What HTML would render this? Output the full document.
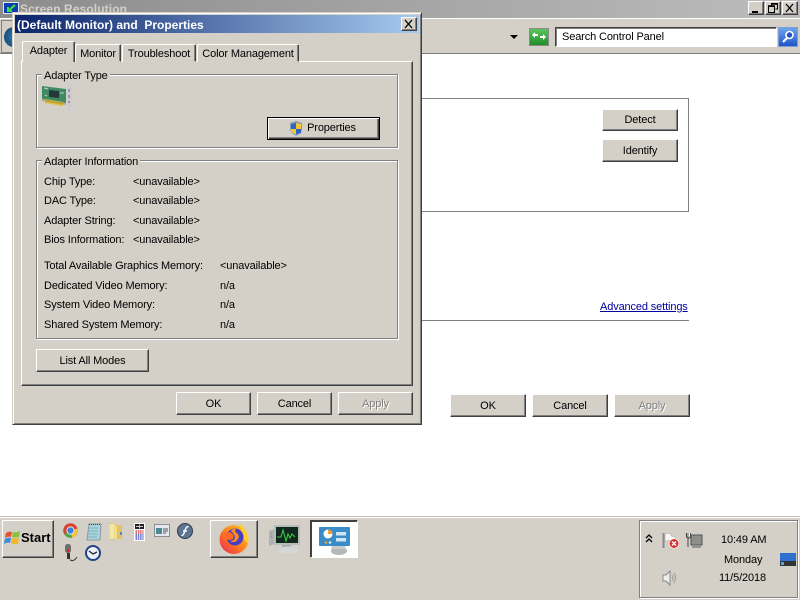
<!DOCTYPE html>
<html><head><meta charset="utf-8"><style>
html,body{margin:0;padding:0;width:800px;height:600px;overflow:hidden;background:#fff}
body{position:relative;font-family:"Liberation Sans",sans-serif;font-size:11px;letter-spacing:-.13px;color:#000}
div,svg,span.t{position:absolute;box-sizing:border-box}
.t{white-space:nowrap;line-height:14px}
.f{background:#d4d0c8}
.b{background:#d4d0c8;border:1px solid;border-color:#fff #404040 #404040 #fff;box-shadow:inset -1px -1px 0 #808080;text-align:center;white-space:nowrap;line-height:22px}
.g{border:1px solid #808080;box-shadow:1px 1px 0 #fff,inset 1px 1px 0 #fff}
.tab{background:#d4d0c8;border:1px solid;border-color:#fff #404040 transparent #fff;border-radius:2px 2px 0 0;text-align:center;line-height:18px;box-shadow:inset -1px 0 0 #808080;white-space:nowrap}
.dis{color:#808080;text-shadow:1px 1px 0 #fff}
</style></head><body>

<div style="left:0;top:0;width:800px;height:18px;background:linear-gradient(90deg,#8c8c8c,#bcbcbc)"></div>
<svg style="left:3px;top:2px" width="16" height="14" viewBox="0 0 16 14"><rect x=".5" y=".5" width="15" height="11" fill="#0b3fb0" stroke="#dfe8f0"/><path d="M12 3L5 9M5 5v4h4" stroke="#3fe03f" stroke-width="2" fill="none"/></svg>
<span class="t" style="left:20px;top:2px;font-weight:bold;font-size:12px;letter-spacing:.1px;color:#d4d0c8">Screen Resolution</span>
<div class="b" style="left:748px;top:1px;width:16px;height:14px"></div>
<svg style="left:748px;top:1px" width="16" height="14" viewBox="0 0 16 14"><path d="M4 10h6v2H4z" fill="#000"/></svg>
<div class="b" style="left:765px;top:1px;width:16px;height:14px"></div>
<svg style="left:765px;top:1px" width="16" height="14" viewBox="0 0 16 14"><path d="M6.500 4.500V2.500H12.500V8H10.500M3.500 5.500H9.500V11.500H3.500z" fill="none" stroke="#000"/><path d="M6 3h7M3 5h7" stroke="#000" stroke-width="1.500"/></svg>
<div class="b" style="left:782px;top:1px;width:16px;height:14px"></div>
<svg style="left:782px;top:1px" width="16" height="14" viewBox="0 0 16 14"><path d="M4 3l7 8M11 3l-7 8" stroke="#000" stroke-width="1.300"/></svg>

<div class="f" style="left:0;top:18px;width:800px;height:36px;border-top:1px solid #fff;border-bottom:1px solid #808080"></div>
<div style="left:1px;top:20px;width:14px;height:33px;border:1px solid #808080;background:#d4d0c8"></div>
<div style="left:4px;top:27px;width:20px;height:20px;border-radius:50%;background:radial-gradient(circle at 60% 50%,#fff 0 2px,#2a78b0 3px,#113a5e)"></div>
<svg style="left:510px;top:35px" width="8" height="4"><path d="M0 0h8L4 4z" fill="#000"/></svg>
<div style="left:529px;top:28px;width:20px;height:18px;border:1px solid #8a8a8a;background:linear-gradient(#5cc55c,#1f8f2a)"></div>
<svg style="left:531px;top:29px" width="16" height="15" viewBox="0 0 16 15"><path d="M1 6l3-3v2h3v2H4v2zM15 8l-3 3v-2H9V7h3V5z" fill="#fff"/></svg>
<div style="left:555px;top:27px;width:222px;height:20px;background:#fff;border:1px solid;border-color:#404040 #fff #fff #404040;box-shadow:inset 1px 1px 0 #808080"></div>
<span class="t" style="left:562px;top:30px">Search Control Panel</span>
<div style="left:778px;top:27px;width:20px;height:20px;border:1px solid #7fa0d0;background:linear-gradient(#6fa4ec,#1f55c8)"></div>
<svg style="left:780px;top:29px" width="16" height="16" viewBox="0 0 16 16"><circle cx="9.500" cy="6" r="3.500" fill="#1f55c8" stroke="#fff" stroke-width="1.600"/><path d="M7 9l-4 4" stroke="#fff" stroke-width="2.200"/></svg>

<div style="left:400px;top:98px;width:289px;height:114px;border:1px solid #808080;background:#fff"></div>
<div class="b" style="left:602px;top:109px;width:76px;height:22px;line-height:21px">Detect</div>
<div class="b" style="left:602px;top:139px;width:76px;height:23px;line-height:22px">Identify</div>
<span class="t" style="left:600px;top:300px;color:#00009c;text-decoration:underline">Advanced settings</span>
<div style="left:420px;top:320px;width:269px;height:1px;background:#808080"></div>
<div class="b" style="left:450px;top:394px;width:76px;height:23px">OK</div>
<div class="b" style="left:532px;top:394px;width:76px;height:23px">Cancel</div>
<div class="b dis" style="left:614px;top:394px;width:76px;height:23px">Apply</div>

<!-- dialog -->
<div class="f" style="left:12px;top:12px;width:410px;height:413px;border:1px solid;border-color:#d4d0c8 #404040 #404040 #d4d0c8;box-shadow:inset 1px 1px 0 #fff,inset -1px -1px 0 #808080"></div>
<div style="left:15px;top:15px;width:404px;height:18px;background:linear-gradient(90deg,#0a246a,#a6caf0)"></div>
<span class="t" style="left:17px;top:18px;color:#fff;font-weight:bold;font-size:12px;letter-spacing:0">(Default Monitor) and&nbsp; Properties</span>
<div class="b" style="left:401px;top:17px;width:16px;height:14px"></div>
<svg style="left:401px;top:17px" width="16" height="14" viewBox="0 0 16 14"><path d="M4 3l7 8M11 3l-7 8" stroke="#000" stroke-width="1.300"/></svg>

<div style="left:21px;top:61px;width:392px;height:325px;background:#d4d0c8;border:1px solid;border-color:#fff #404040 #404040 #fff;box-shadow:inset -1px -1px 0 #808080"></div>
<div class="tab" style="left:75px;top:44px;width:46px;height:18px">Monitor</div>
<div class="tab" style="left:122px;top:44px;width:74px;height:18px">Troubleshoot</div>
<div class="tab" style="left:197px;top:44px;width:102px;height:18px">Color Management</div>
<div class="tab" style="left:22px;top:41px;width:53px;height:21px;line-height:18px;border-bottom:0;z-index:2">Adapter</div>

<div class="g" style="left:36px;top:74px;width:362px;height:74px"></div>
<span class="t f" style="left:42px;top:69px;height:13px;padding:1px 2px 0;line-height:13px">Adapter Type</span>
<svg style="left:42px;top:83px" width="31" height="29" viewBox="0 0 31 29"><path d="M0 3L24 6V20L0 16z" fill="#3f8a62"/><path d="M7 7l10 1v7L7 14z" fill="#24383a"/><path d="M2 5l4 1M18 10l4 0M3 12l2 1" stroke="#bcd8c0"/><path d="M3 16l18 3v4L3 20z" fill="#dcbc3c"/><path d="M0 16l24 4v2L0 18z" fill="#8a7a3a" opacity=".4"/><path d="M25 2l4-1 1 2-1 25-3 0z" fill="#c8ccd0"/><path d="M27 6v3M27 12v3M27 18v2" stroke="#667"/></svg>
<div class="b" style="left:267px;top:117px;width:113px;height:23px;border:1px solid #000;box-shadow:inset 1px 1px 0 #fff,inset -1px -1px 0 #404040,inset -2px -2px 0 #808080;line-height:21px;padding-left:16px">Properties</div>
<svg style="left:289px;top:121px" width="14" height="15" viewBox="0 0 14 15"><path d="M7 0L13 2V8Q13 12 7 15Q1 12 1 8V2z" fill="#8a9ab0"/><path d="M7 2V8H2V3zM7 8H12V12L7 13.500z" fill="#2a66c8"/><path d="M7 2L12 3V8H7zM7 8V13.500L2 11V8z" fill="#f2c830"/></svg>

<div class="g" style="left:36px;top:160px;width:362px;height:179px"></div>
<span class="t f" style="left:42px;top:155px;height:13px;padding:1px 2px 0;line-height:13px">Adapter Information</span>
<span class="t" style="left:44px;top:175px">Chip Type:</span><span class="t" style="left:133px;top:175px">&lt;unavailable&gt;</span>
<span class="t" style="left:44px;top:194px">DAC Type:</span><span class="t" style="left:133px;top:194px">&lt;unavailable&gt;</span>
<span class="t" style="left:44px;top:214px">Adapter String:</span><span class="t" style="left:133px;top:214px">&lt;unavailable&gt;</span>
<span class="t" style="left:44px;top:233px">Bios Information:</span><span class="t" style="left:133px;top:233px">&lt;unavailable&gt;</span>
<span class="t" style="left:44px;top:259px">Total Available Graphics Memory:</span><span class="t" style="left:220px;top:259px">&lt;unavailable&gt;</span>
<span class="t" style="left:44px;top:279px">Dedicated Video Memory:</span><span class="t" style="left:220px;top:279px">n/a</span>
<span class="t" style="left:44px;top:298px">System Video Memory:</span><span class="t" style="left:220px;top:298px">n/a</span>
<span class="t" style="left:44px;top:318px">Shared System Memory:</span><span class="t" style="left:220px;top:318px">n/a</span>
<div class="b" style="left:36px;top:349px;width:113px;height:23px">List All Modes</div>
<div class="b" style="left:176px;top:392px;width:75px;height:23px">OK</div>
<div class="b" style="left:257px;top:392px;width:75px;height:23px">Cancel</div>
<div class="b dis" style="left:338px;top:392px;width:75px;height:23px">Apply</div>

<!-- taskbar -->
<div class="f" style="left:0;top:516px;width:800px;height:84px;border-top:1px solid #c4c0b8;box-shadow:inset 0 1px 0 #fff"></div>
<div class="b" style="left:2px;top:520px;width:52px;height:38px"></div>
<svg style="left:4px;top:530px" width="17" height="16" viewBox="0 0 17 16"><path d="M2 3q3-2 6-1l-1 5q-3-1-6 1z" fill="#e2542a"/><path d="M9 2q3 1 7-1l-1 6q-4 1-7 0z" fill="#8cc03a"/><path d="M1 9q3-2 6-1l-1 5q-3-1-6 1z" fill="#3a8ae0"/><path d="M8 8q3 1 7 0l-1 6q-4 1-7-1z" fill="#f0b830"/></svg>
<span class="t" style="left:21px;top:531px;font-weight:bold;font-size:13px;letter-spacing:0">Start</span>

<svg style="left:63px;top:523px" width="15" height="15" viewBox="0 0 15 15"><circle cx="7.500" cy="7.500" r="7.300" fill="#d8432f"/><path d="M7.500 7.500L1.200 11A7.300 7.300 0 0 0 9 14.600z" fill="#4aa850"/><path d="M7.500 7.500L9 14.600A7.300 7.300 0 0 0 14.600 5.500z" fill="#f2c72e"/><circle cx="7.500" cy="7.500" r="3.600" fill="#3d7fe0" stroke="#e8e8f0"/></svg>
<svg style="left:86px;top:523px" width="16" height="18" viewBox="0 0 16 18"><path d="M3 1h12l-1 16H1z" fill="#a9d6de" stroke="#8a9aa0"/><path d="M3 5h9M3 8h9M2.500 11h9M2 14h9" stroke="#7fb0bc"/><path d="M3 1.500h12" stroke="#445" stroke-dasharray="1 1"/></svg>
<svg style="left:109px;top:523px" width="14" height="18" viewBox="0 0 14 18"><path d="M0 1l6-1v16l-6 1z" fill="#f6e6a4" stroke="#c8b060" stroke-width=".5"/><path d="M6 2h7v14H6z" fill="#e4c264"/><path d="M6 2l2 1v13H6z" fill="#f4dc88"/><rect x="11" y="9" width="2" height="3" fill="#4a8ad0"/></svg>
<svg style="left:134px;top:523px" width="11" height="18" viewBox="0 0 11 18"><rect width="11" height="18" fill="#fff"/><rect x="1" y="1" width="9" height="5" fill="#222"/><path d="M2 3.500h7M5.500 1.500v4" stroke="#ccc"/><path d="M1.500 8h8M1.500 10h8" stroke="#c02020" stroke-dasharray="1.500 .8" stroke-width="1.300"/><path d="M1.500 12h8M1.500 14h8M1.500 16h8" stroke="#2030b0" stroke-dasharray="1.500 .8" stroke-width="1.300"/></svg>
<svg style="left:154px;top:524px" width="16" height="13" viewBox="0 0 16 13"><rect x=".5" y=".5" width="15" height="12" fill="#e4e8ec" stroke="#8a8f98"/><rect x="2" y="4" width="6" height="6" fill="#4a8a90"/><path d="M9 5h5M9 7h5M9 9h3" stroke="#556"/></svg>
<svg style="left:177px;top:523px" width="16" height="16" viewBox="0 0 16 16"><circle cx="8" cy="8" r="7.500" fill="#5f7494" stroke="#303a4a"/><path d="M4.500 12.500c4 0 2.500-9 7-9M6 8h4" stroke="#fff" stroke-width="1.400" fill="none"/></svg>
<svg style="left:64px;top:544px" width="15" height="18" viewBox="0 0 15 18"><rect x="1" y="0" width="6" height="9" rx="2.500" fill="#707070"/><path d="M3 9h3v6H3z" fill="#333"/><path d="M3.500 5h1.500v3H3.500z" fill="#d02020"/><path d="M6 15.500q1 1.500 3 1t4-3.500" stroke="#333" fill="none"/></svg>
<svg style="left:85px;top:545px" width="16" height="16" viewBox="0 0 16 16"><circle cx="8" cy="8" r="7" fill="#eaf0f8" stroke="#22408a" stroke-width="2"/><path d="M4 6l4 3 4-2" stroke="#223" stroke-width="1.300" fill="none"/></svg>

<div class="b" style="left:210px;top:520px;width:48px;height:38px"></div>
<svg style="left:219px;top:523px" width="31" height="31" viewBox="0 0 31 31"><defs><linearGradient id="fx" x1="1" y1="0" x2="0" y2="1"><stop offset="0" stop-color="#ffd22e"/><stop offset=".55" stop-color="#ff7a1e"/><stop offset="1" stop-color="#e8205c"/></linearGradient></defs><circle cx="15" cy="16.500" r="14.500" fill="url(#fx)"/><path d="M20 0q12 10 9 21l-7-8q1-6-2-13z" fill="#ffcf2e"/><circle cx="16" cy="14" r="8.500" fill="#4a3fc0"/><path d="M12 8q2-3 5-2-2 3 1 4 3 3 1 6-3 5-8 2 4 0 5-3 0-3-4-7z" fill="#ff8a1e"/><path d="M5 9q4 1 6 0 5 3 3 7-4 2-7 0-2-3-2-7z" fill="#ff6a24"/></svg>
<svg style="left:269px;top:525px" width="32" height="29" viewBox="0 0 32 29"><path d="M0 6l5-2v15l-5 2z" fill="#aeb2ae"/><path d="M2 9l1-.5M2 12l1-.5" stroke="#5a5"/><rect x="5" y="0" width="26" height="20" fill="#b8bcbc"/><rect x="7" y="2" width="22" height="16" fill="#0f2a1c"/><path d="M8 12h4l2-7 3 11 2-7 2 4 2-4 3 3" stroke="#3fd04a" fill="none"/><path d="M13 20h9v3h-9z" fill="#a8acac"/><ellipse cx="19" cy="25" rx="10" ry="3.500" fill="#d4d7d7"/></svg>
<div style="left:310px;top:520px;width:48px;height:38px;background:#fff;border:1px solid;border-color:#404040 #fff #fff #404040;box-shadow:inset 1px 1px 0 #404040"></div>
<svg style="left:319px;top:527px" width="31" height="28" viewBox="0 0 31 28"><rect width="31" height="19" rx="1" fill="#3a8cc8"/><rect x="17" y="5" width="10" height="3.500" fill="#cfe6f5"/><rect x="17" y="11" width="10" height="3.500" fill="#cfe6f5"/><circle cx="9" cy="7" r="4.500" fill="#fff"/><path d="M9 7V2.500A4.500 4.500 0 0 1 13.500 7z" fill="#f0a030"/><circle cx="7" cy="15.500" r="1.300" fill="#f0a030"/><circle cx="11" cy="15.500" r="1.300" fill="#cfe6f5"/><ellipse cx="20" cy="24" rx="8" ry="4" fill="#b4b8b8"/><path d="M13 19h13l1 3H12z" fill="#c8cccc"/></svg>

<!-- tray -->
<div style="left:639px;top:520px;width:159px;height:78px;border:1px solid #808080;box-shadow:1px 1px 0 #fff,inset 1px 1px 0 #fff"></div>
<svg style="left:645px;top:534px" width="8" height="9" viewBox="0 0 8 9"><path d="M1 4l3-3 3 3M1 8l3-3 3 3" stroke="#000" stroke-width="1.300" fill="none"/></svg>
<svg style="left:662px;top:532px" width="18" height="17" viewBox="0 0 18 17"><path d="M1.500 1v15" stroke="#8a8a8a" stroke-width="2"/><path d="M3 1.500h5l2 3h3v4H6l-3 1z" fill="#f6f6f4" stroke="#aaa" stroke-width=".6"/><circle cx="12" cy="11.500" r="4.800" fill="#d83030" stroke="#fff" stroke-width=".6"/><path d="M10 9.500l4 4M14 9.500l-4 4" stroke="#fff" stroke-width="1.300"/></svg>
<svg style="left:686px;top:532px" width="17" height="17" viewBox="0 0 17 17"><rect x="5" y="3" width="11" height="10" fill="#8d908a" stroke="#555"/><path d="M2 15V1M0.500 1v3q0 2 2 2t2-2V1" stroke="#444" fill="#fff"/><path d="M6 15h9" stroke="#555"/></svg>
<svg style="left:661px;top:569px" width="18" height="18" viewBox="0 0 18 18"><path d="M2 6h3l4-4v14l-4-4H2z" fill="#eee" stroke="#888"/><path d="M11 6q2 3 0 6M13 4q3 5 0 10" stroke="#999" fill="none"/></svg>
<span class="t" style="left:721px;top:533px">10:49 AM</span>
<span class="t" style="left:724px;top:553px">Monday</span>
<span class="t" style="left:719px;top:571px">11/5/2018</span>
<svg style="left:780px;top:553px" width="16" height="13" viewBox="0 0 16 13"><rect width="16" height="13" fill="#2f6fd0"/><rect y="8" width="16" height="5" fill="#333"/><rect x="1" y="9" width="3" height="3" fill="#4fa8e0"/></svg>
</body></html>
